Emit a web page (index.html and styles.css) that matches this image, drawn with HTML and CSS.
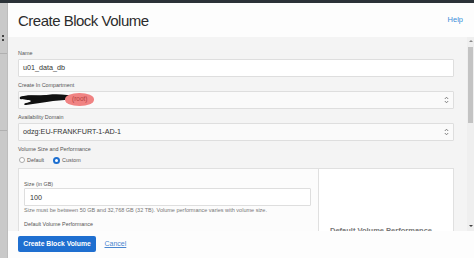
FILE: index.html
```html
<!DOCTYPE html>
<html>
<head>
<meta charset="utf-8">
<link rel="stylesheet" href="styles.css">
</head>
<body>
<div class="topbar"></div>
<div class="page">
  <aside class="backdrop">
    <span class="mark mark-a"></span>
    <span class="mark mark-b"></span>
    <span class="rule rule-a"></span>
    <span class="rule rule-b"></span>
  </aside>
  <div class="modal">
    <header class="modal-head">
      <h1 class="title">Create Block Volume</h1>
      <a class="help">Help</a>
    </header>
    <div class="modal-body">
      <div class="content">
        <div class="field">
          <div class="label">Name</div>
          <div class="control">u01_data_db</div>
        </div>
        <div class="field">
          <div class="label">Create In Compartment</div>
          <div class="control select">
            <span class="redact">
              <svg class="scribble" width="56" height="13" viewBox="0 0 56 13"><path d="M1 4 C6 2 14 2 22 3 C30 1 40 1 48 2 C52 2 55 3 55 5 C50 7 42 7 34 8 C26 9 16 11 7 12 C5 12 4 11 7 10 C11 9 14 8 10 7 C6 7 2 6 1 4 Z" fill="#111"/><path d="M2 5 C14 3 32 3 54 4" stroke="#111" stroke-width="2.6" fill="none" stroke-linecap="round"/></svg>
              <span class="root">(root)</span>
            </span>
            <svg class="updown" width="5" height="8" viewBox="0 0 5 8"><path d="M0.8 3 L2.5 1.2 L4.2 3 M0.8 5 L2.5 6.8 L4.2 5" stroke="#666" stroke-width="0.8" fill="none"/></svg>
          </div>
        </div>
        <div class="field">
          <div class="label">Availability Domain</div>
          <div class="control select">
            <span>odzg:EU-FRANKFURT-1-AD-1</span>
            <svg class="updown" width="5" height="8" viewBox="0 0 5 8"><path d="M0.8 3 L2.5 1.2 L4.2 3 M0.8 5 L2.5 6.8 L4.2 5" stroke="#666" stroke-width="0.8" fill="none"/></svg>
          </div>
        </div>
        <div class="label vol-label">Volume Size and Performance</div>
        <div class="radios">
          <span class="radio"></span><span class="radio-text">Default</span>
          <span class="radio on"></span><span class="radio-text">Custom</span>
        </div>
        <div class="perf">
          <div class="perf-left">
            <div class="label">Size (in GB)</div>
            <div class="control size">100</div>
            <div class="hint">Size must be between 50 GB and 32,768 GB (32 TB). Volume performance varies with volume size.</div>
            <div class="label dvp">Default Volume Performance</div>
          </div>
          <div class="perf-right">
            <div class="perf-head">Default Volume Performance</div>
          </div>
        </div>
      </div>
      <div class="scrollbar">
        <span class="sb-up"></span>
        <span class="sb-thumb"></span>
        <span class="sb-fill"></span>
        <span class="sb-down"></span>
      </div>
    </div>
    <footer class="modal-foot">
      <button class="primary">Create Block Volume</button>
      <a class="cancel">Cancel</a>
    </footer>
  </div>
</div>
</body>
</html>
```
FILE: styles.css
```css
* { box-sizing: border-box; }
html, body {
  margin: 0;
  padding: 0;
  width: 474px;
  height: 258px;
  overflow: hidden;
  font-family: "Liberation Sans", Arial, sans-serif;
  background: #f4f4f4;
}
.topbar {
  height: 3px;
  background: #2b3238;
}
.page {
  display: flex;
  height: 255px;
}
.backdrop {
  width: 8px;
  flex: none;
  background: #c9c9c9;
  position: relative;
  border-right: 1px solid #bdbdbd;
}
.mark {
  position: absolute;
  left: 2px;
  width: 2px;
  height: 2px;
  background: #444;
}
.mark-a { top: 32px; }
.mark-b { top: 36px; }
.rule {
  position: absolute;
  left: 0;
  width: 7px;
  height: 1px;
  background: #b0b0b0;
}
.rule-a { top: 50px; }
.rule-b { top: 127px; }

.modal {
  flex: 1;
  display: flex;
  flex-direction: column;
  min-width: 0;
}
.modal-head {
  height: 34px;
  flex: none;
  background: #fdfdfd;
  display: flex;
  justify-content: space-between;
  align-items: flex-start;
  padding: 0 11px 0 10px;
}
.title {
  margin: 9px 0 0 0;
  font-size: 15px;
  line-height: 18px;
  font-weight: normal;
  letter-spacing: -0.5px;
  color: #2c2c2c;
}
.help {
  margin-top: 11.5px;
  font-size: 7.5px;
  line-height: 9px;
  color: #3b8ed9;
}
.modal-body {
  flex: 1;
  display: flex;
  overflow: hidden;
  min-height: 0;
  background: #f4f4f4;
}
.content {
  flex: 1;
  padding: 12px 13px 0 10px;
  min-width: 0;
}
.field {
  margin-bottom: 4.5px;
}
.label {
  font-size: 5.4px;
  line-height: 8px;
  color: #555;
  margin-bottom: 1.5px;
}
.control {
  height: 18px;
  background: #fff;
  border: 1px solid #dedede;
  border-radius: 1px;
  padding: 0 4px;
  display: flex;
  align-items: center;
  font-size: 7.2px;
  color: #333;
}
.select {
  justify-content: space-between;
  background: #fafafa;
}
.redact {
  display: flex;
  align-items: center;
  margin-left: -4px;
}
.scribble { display: block; }
.root {
  margin-left: -10px;
  background: #f08383;
  border-radius: 50%;
  padding: 2px 6px 2px 7px;
  font-size: 6.5px;
  line-height: 8.5px;
  color: #b54040;
}
.vol-label {
  margin-top: 0.5px;
}
.radios {
  display: flex;
  align-items: center;
  height: 9px;
  margin-top: 2.5px;
  margin-bottom: 3.5px;
  padding-left: 1px;
}
.radio {
  width: 6px;
  height: 6px;
  border-radius: 50%;
  border: 1px solid #aaa;
  background: #fff;
  flex: none;
}
.radio.on {
  width: 7px;
  height: 7px;
  border: 2.2px solid #1d6fd0;
}
.radio-text {
  font-size: 5.4px;
  color: #555;
  margin-left: 2px;
  margin-right: 9px;
}
.perf {
  display: flex;
  border: 1px solid #e0e0e0;
  background: #fcfcfc;
  height: 120px;
}
.perf-left {
  width: 299px;
  flex: none;
  padding: 11px 7px 0 5px;
}
.size {
  margin-top: -1.5px;
  padding-left: 5px;
}
.hint {
  font-size: 5.5px;
  line-height: 7px;
  color: #777;
  white-space: nowrap;
  margin-top: 0.5px;
}
.dvp {
  margin-top: 6px;
}
.perf-right {
  flex: 1;
  border-left: 1px solid #e0e0e0;
  background: #fff;
  padding: 57px 0 0 11px;
}
.perf-head {
  font-size: 7.5px;
  line-height: 9px;
  font-weight: bold;
  color: #777;
  white-space: nowrap;
}
.scrollbar {
  width: 7px;
  flex: none;
  background: #efefef;
  display: flex;
  flex-direction: column;
  align-items: center;
  padding-top: 3px;
}
.sb-up {
  width: 0;
  height: 0;
  border-left: 2px solid transparent;
  border-right: 2px solid transparent;
  border-bottom: 2px solid #888;
}
.sb-thumb {
  width: 5px;
  height: 76px;
  margin-top: 5px;
  background: #c3c3c3;
}
.sb-fill { flex: 1; }
.sb-down {
  width: 0;
  height: 0;
  border-left: 2px solid transparent;
  border-right: 2px solid transparent;
  border-top: 2px solid #444;
  margin-bottom: 4px;
}
.modal-foot {
  height: 27px;
  flex: none;
  background: #fdfdfd;
  display: flex;
  align-items: flex-start;
  padding: 5px 0 0 10px;
}
.primary {
  width: 78px;
  height: 15.5px;
  background: #1f6fd0;
  color: #fff;
  border: none;
  border-radius: 2px;
  font-family: "Liberation Sans", Arial, sans-serif;
  font-size: 6.8px;
  font-weight: bold;
  padding: 0;
}
.cancel {
  margin-left: 8.5px;
  margin-top: 4px;
  font-size: 7px;
  line-height: 8px;
  color: #4a86d0;
  text-decoration: underline;
}
```
